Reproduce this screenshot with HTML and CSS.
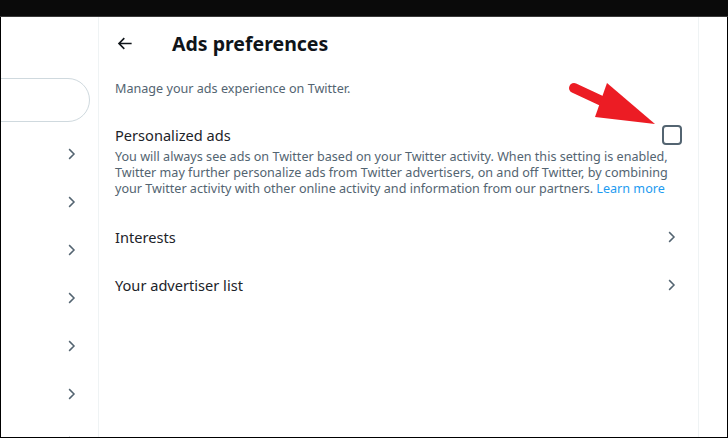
FILE: index.html
```html
<!DOCTYPE html>
<html>
<head>
<meta charset="utf-8">
<link rel="stylesheet" href="styles.css">
</head>
<body>
<div class="frame">
  <div class="topbar"></div>
  <div class="window">
    <aside class="sidebar">
      <div class="search"></div>
      <ul class="navlist">
        <li><svg class="chev" viewBox="0 0 24 24"><path d="M9.5 5.5 16 12l-6.5 6.5"/></svg></li>
        <li><svg class="chev" viewBox="0 0 24 24"><path d="M9.5 5.5 16 12l-6.5 6.5"/></svg></li>
        <li><svg class="chev" viewBox="0 0 24 24"><path d="M9.5 5.5 16 12l-6.5 6.5"/></svg></li>
        <li><svg class="chev" viewBox="0 0 24 24"><path d="M9.5 5.5 16 12l-6.5 6.5"/></svg></li>
        <li><svg class="chev" viewBox="0 0 24 24"><path d="M9.5 5.5 16 12l-6.5 6.5"/></svg></li>
        <li><svg class="chev" viewBox="0 0 24 24"><path d="M9.5 5.5 16 12l-6.5 6.5"/></svg></li>
        <li><svg class="chev" viewBox="0 0 24 24"><path d="M9.5 5.5 16 12l-6.5 6.5"/></svg></li>
      </ul>
    </aside>
    <main class="main">
      <header class="header">
        <svg class="back" viewBox="0 0 24 24"><path d="M7.414 13l5.043 5.04-1.414 1.42L3.586 12l7.457-7.46 1.414 1.42L7.414 11H21v2H7.414z"/></svg>
        <h1 class="title">Ads preferences</h1>
      </header>
      <p class="intro">Manage your ads experience on Twitter.</p>
      <section class="setting">
        <div class="setting-top">
          <span class="label">Personalized ads</span>
          <span class="checkbox"></span>
        </div>
        <p class="desc"><span class="line">You will always see ads on Twitter based on your Twitter activity. When this setting is enabled,</span><span class="line">Twitter may further personalize ads from Twitter advertisers, on and off Twitter, by combining</span><span class="line">your Twitter activity with other online activity and information from our partners. <a class="link" href="#">Learn more</a></span></p>
      </section>
      <div class="row first"><span class="label">Interests</span><svg class="chev" viewBox="0 0 24 24"><path d="M9.5 5.5 16 12l-6.5 6.5"/></svg></div>
      <div class="row"><span class="label">Your advertiser list</span><svg class="chev" viewBox="0 0 24 24"><path d="M9.5 5.5 16 12l-6.5 6.5"/></svg></div>
    </main>
    <div class="rightcol"></div>
    <svg class="annot" viewBox="0 0 728 438" width="728" height="438">
      <line x1="574" y1="89" x2="604" y2="103" stroke="#ec1c24" stroke-width="10" stroke-linecap="round"/>
      <polygon points="607,84 655,125 595,118" fill="#ec1c24"/>
    </svg>
  </div>
</div>
</body>
</html>
```
FILE: styles.css
```css
* { box-sizing: border-box; }
html, body { margin: 0; padding: 0; }
body {
  width: 728px;
  height: 438px;
  overflow: hidden;
  background: #000;
  font-family: "Noto Sans", "Open Sans", sans-serif;
  color: #0f1419;
}
.frame {
  width: 728px;
  height: 438px;
  display: flex;
  flex-direction: column;
  background: #000;
}
.topbar {
  height: 17px;
  background: #0a0a0a;
  border-bottom: 1px solid #3a3a3a;
  flex: none;
}
.window {
  flex: 1;
  margin: 0 1px 1px 1px;
  background: #fff;
  display: flex;
  position: relative;
  overflow: hidden;
}
.sidebar {
  width: 98px;
  flex: none;
  border-right: 1px solid #eff3f4;
}
.search {
  margin-top: 61px;
  margin-left: -40px;
  width: 129px;
  height: 44px;
  border: 1px solid #cfd9de;
  border-radius: 22px;
}
.navlist {
  list-style: none;
  margin: 8px 0 0 0;
  padding: 0;
}
.navlist li {
  height: 48px;
  display: flex;
  align-items: center;
  justify-content: flex-end;
  padding-right: 18px;
}
.chev {
  width: 18px;
  height: 18px;
  fill: none;
  stroke: #536471;
  stroke-width: 2;
}
.main {
  width: 600px;
  flex: none;
  border-right: 1px solid #eff3f4;
  padding: 0 16px;
}
.header {
  height: 53px;
  display: flex;
  align-items: center;
}
.back {
  width: 19px;
  height: 19px;
  fill: #0f1419;
  flex: none;
}
.title {
  margin: 0 0 0 38px;
  font-size: 19.5px;
  font-weight: 700;
  line-height: 24px;
}
.intro {
  margin: 11px 0 0 0;
  font-size: 12.6px;
  line-height: 16px;
  color: #536471;
}
.setting {
  margin-top: 26px;
}
.setting-top {
  display: flex;
  justify-content: space-between;
  align-items: center;
  height: 24px;
}
.label {
  font-size: 14.6px;
  line-height: 20px;
  color: #1c2329;
}
.checkbox {
  width: 20px;
  height: 20px;
  border: 2px solid #536471;
  border-radius: 4px;
}
.desc {
  margin: 2px 0 0 0;
  font-size: 12.6px;
  line-height: 16px;
  color: #536471;
}
.line {
  display: block;
  white-space: nowrap;
}
.link { color: #1d9bf0; text-decoration: none; }
.row {
  height: 48px;
  display: flex;
  align-items: center;
  justify-content: space-between;
}
.row.first { margin-top: 16px; }
.row .chev { margin-right: 2px; }
.rightcol { flex: 1; }
.annot {
  position: absolute;
  left: -1px;
  top: -18px;
  pointer-events: none;
}
```
